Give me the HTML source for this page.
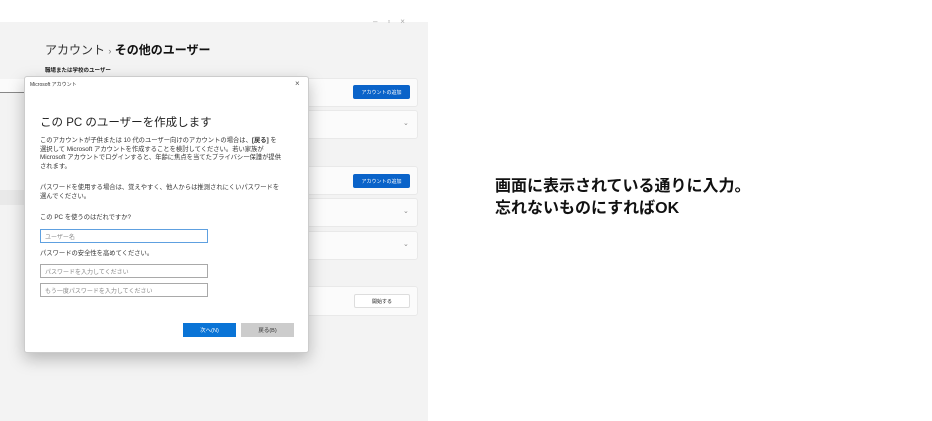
<!DOCTYPE html>
<html><head><meta charset="utf-8"><style>
*{margin:0;padding:0;box-sizing:border-box}
body{width:932px;height:421px;background:#fff;position:relative;overflow:hidden;font-family:"Liberation Sans","Noto Sans CJK JP",sans-serif;color:#1a1a1a}
.a{position:absolute}
.win{left:0;top:22px;width:428px;height:399px;background:#f3f3f3}
.card{position:absolute;left:200px;width:218px;background:#fbfbfb;border:1px solid #e9e9e9;border-radius:3px}
.btn{position:absolute;left:353px;width:57px;height:14px;background:#0a63c9;color:#fff;font-size:5px;display:flex;align-items:center;justify-content:center;border-radius:2px}
.chev{position:absolute;left:403px;font-size:7px;color:#888}
.dlg{left:24px;top:76px;width:285px;height:277px;background:#fff;border:1px solid #ccc;border-radius:3px;box-shadow:0 6px 16px rgba(0,0,0,.25)}
.inp{position:absolute;left:15px;width:168px;height:14px;border:1px solid #a9a9a9;font-size:6px;color:#888;padding-left:4px;display:flex;align-items:center}
.p{position:absolute;left:15px;width:242px;font-size:6.3px;line-height:8.5px;color:#333}
</style></head><body>
<div class="a win"></div>
<div class="a" style="left:373px;top:17px;font-size:8px;color:#aaa;letter-spacing:10px">–▫×</div>
<div class="a" style="left:45px;top:41px;font-size:12px;color:#333">アカウント <span style="font-size:9px;color:#777">›</span> <b style="color:#111">その他のユーザー</b></div>
<div class="a" style="left:45px;top:66px;font-size:5.5px;font-weight:bold">職場または学校のユーザー</div>
<div class="a" style="left:0;top:79px;width:24px;height:14px;background:#fbfbfb;border-bottom:1px solid #888"></div>
<div class="a" style="left:0;top:190px;width:24px;height:15px;background:#e9e9e9"></div>
<div class="card" style="top:78px;height:29px"></div><div class="btn" style="top:85px">アカウントの追加</div>
<div class="card" style="top:110px;height:29px"></div><div class="chev" style="top:119px">⌄</div>
<div class="card" style="top:166px;height:29px"></div><div class="btn" style="top:174px">アカウントの追加</div>
<div class="card" style="top:198px;height:29px"></div><div class="chev" style="top:207px">⌄</div>
<div class="card" style="top:231px;height:29px"></div><div class="chev" style="top:240px">⌄</div>
<div class="card" style="top:286px;height:30px"></div>
<div class="a" style="left:354px;top:294px;width:56px;height:14px;background:#fff;border:1px solid #ddd;font-size:5px;display:flex;align-items:center;justify-content:center;border-radius:2px">開始する</div>
<div class="a dlg">
 <div class="a" style="left:5px;top:4px;font-size:5px;color:#333">Microsoft アカウント</div>
 <div class="a" style="left:270px;top:2px;font-size:8px;color:#555">×</div>
 <div class="a" style="left:15px;top:37px;font-size:11.5px;color:#222">この PC のユーザーを作成します</div>
 <div class="p" style="top:60px">このアカウントが子供または 10 代のユーザー向けのアカウントの場合は、<b>[戻る]</b> を選択して Microsoft アカウントを作成することを検討してください。若い家族が<br>Microsoft アカウントでログインすると、年齢に焦点を当てたプライバシー保護が提供されます。</div>
 <div class="p" style="top:107px">パスワードを使用する場合は、覚えやすく、他人からは推測されにくいパスワードを選んでください。</div>
 <div class="p" style="top:137px">この PC を使うのはだれですか?</div>
 <div class="inp" style="top:152px;border-color:#5ea0e0">ユーザー名</div>
 <div class="p" style="top:173px">パスワードの安全性を高めてください。</div>
 <div class="inp" style="top:187px">パスワードを入力してください</div>
 <div class="inp" style="top:206px">もう一度パスワードを入力してください</div>
 <div class="a" style="left:158px;top:246px;width:53px;height:14px;background:#0a74d6;color:#fff;font-size:5.5px;display:flex;align-items:center;justify-content:center">次へ(N)</div>
 <div class="a" style="left:216px;top:246px;width:53px;height:14px;background:#ccc;color:#333;font-size:5.5px;display:flex;align-items:center;justify-content:center">戻る(B)</div>
</div>
<div class="a" style="left:495px;top:176px;font-size:16px;font-weight:bold;line-height:22px;color:#111">画面に表示されている通りに入力。<br>忘れないものにすればOK</div>
</body></html>
